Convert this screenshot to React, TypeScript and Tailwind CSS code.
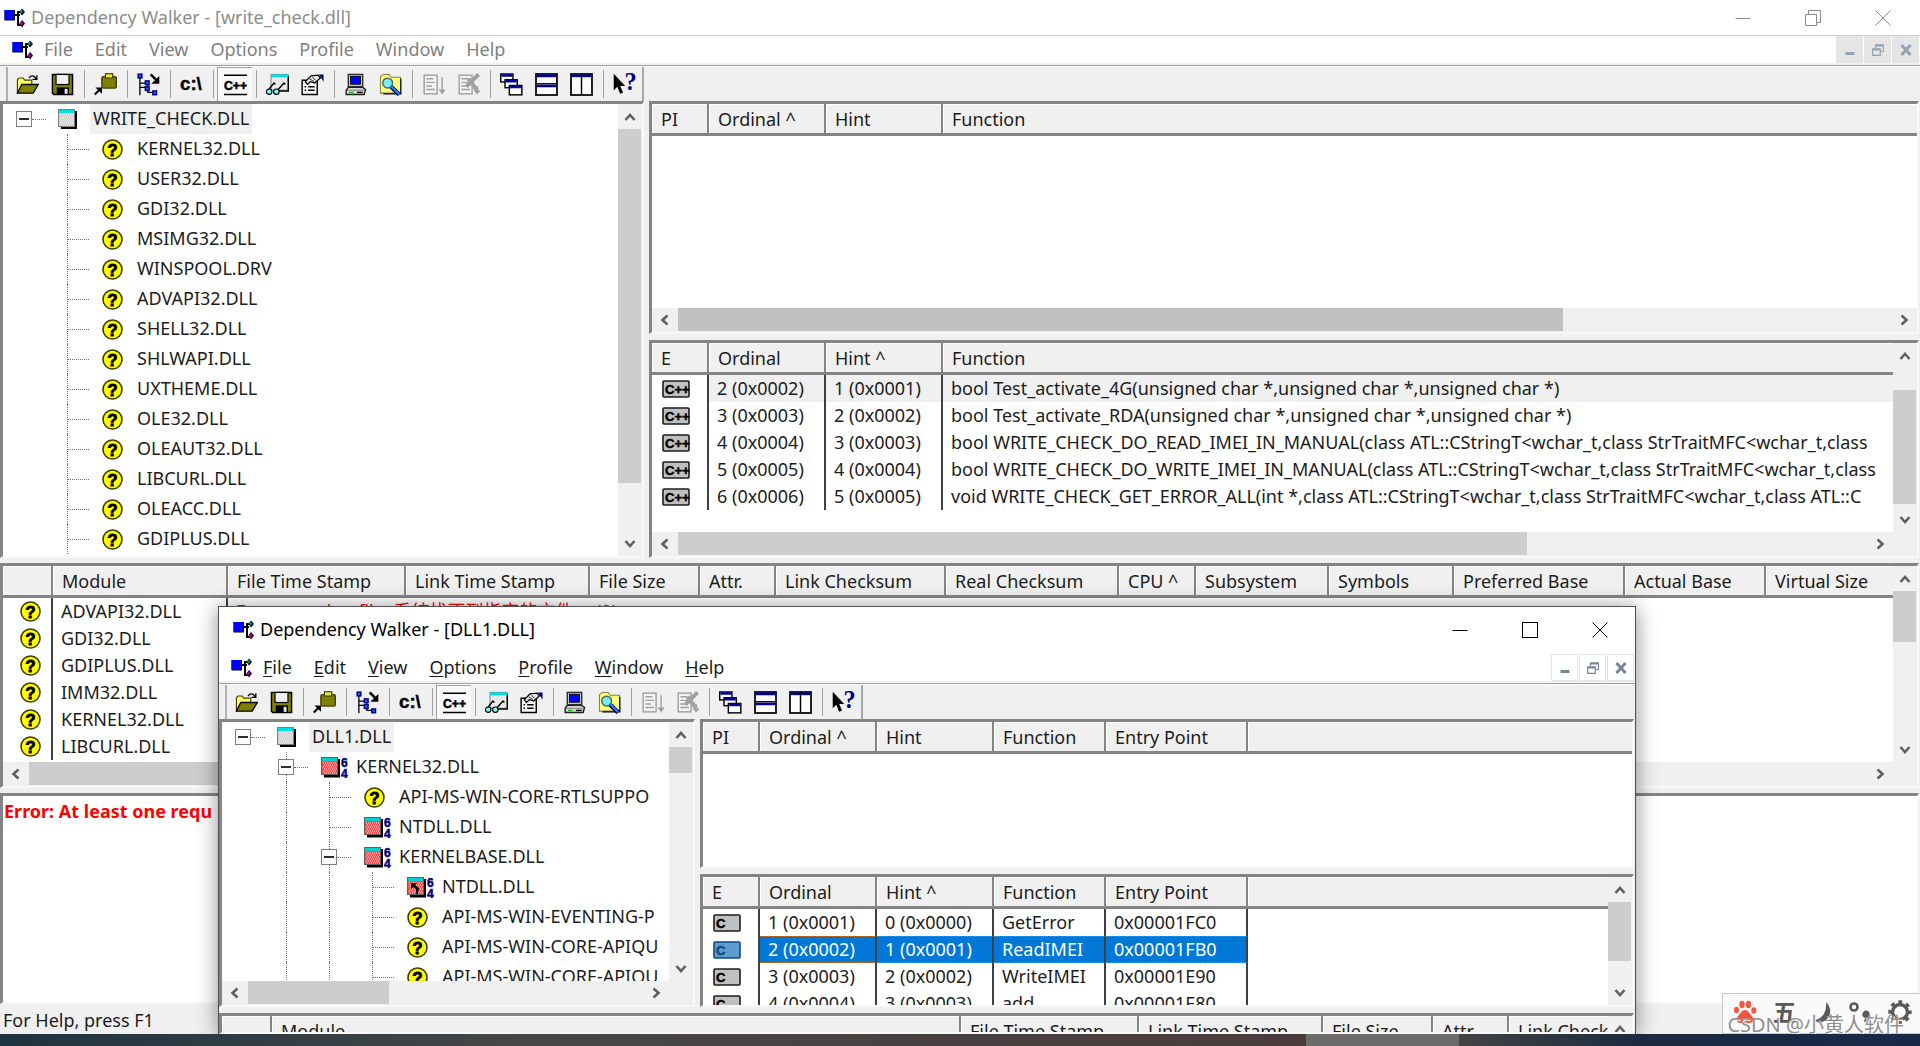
import type { ReactNode } from "react";
import clsx from "clsx";

type TreeNode = {
  name: string;
  level: number;
  icon: "root" | "missing" | "module" | "duplicate";
  expander?: boolean;
};

type Column = {
  label: string;
  width: string;
};

type ExportRow = {
  ordinal: string;
  hint: string;
  name: string;
  entry?: string;
  focused?: boolean;
  selected?: boolean;
};

const mainTree: TreeNode[] = [
  { name: "WRITE_CHECK.DLL", level: 0, icon: "root", expander: true },
  { name: "KERNEL32.DLL", level: 1, icon: "missing" },
  { name: "USER32.DLL", level: 1, icon: "missing" },
  { name: "GDI32.DLL", level: 1, icon: "missing" },
  { name: "MSIMG32.DLL", level: 1, icon: "missing" },
  { name: "WINSPOOL.DRV", level: 1, icon: "missing" },
  { name: "ADVAPI32.DLL", level: 1, icon: "missing" },
  { name: "SHELL32.DLL", level: 1, icon: "missing" },
  { name: "SHLWAPI.DLL", level: 1, icon: "missing" },
  { name: "UXTHEME.DLL", level: 1, icon: "missing" },
  { name: "OLE32.DLL", level: 1, icon: "missing" },
  { name: "OLEAUT32.DLL", level: 1, icon: "missing" },
  { name: "LIBCURL.DLL", level: 1, icon: "missing" },
  { name: "OLEACC.DLL", level: 1, icon: "missing" },
  { name: "GDIPLUS.DLL", level: 1, icon: "missing" },
];

const dllTree: TreeNode[] = [
  { name: "DLL1.DLL", level: 0, icon: "root", expander: true },
  { name: "KERNEL32.DLL", level: 1, icon: "module", expander: true },
  { name: "API-MS-WIN-CORE-RTLSUPPO", level: 2, icon: "missing" },
  { name: "NTDLL.DLL", level: 2, icon: "module" },
  { name: "KERNELBASE.DLL", level: 2, icon: "module", expander: true },
  { name: "NTDLL.DLL", level: 3, icon: "duplicate" },
  { name: "API-MS-WIN-EVENTING-P", level: 3, icon: "missing" },
  { name: "API-MS-WIN-CORE-APIQU", level: 3, icon: "missing" },
  { name: "API-MS-WIN-CORE-APIQU", level: 3, icon: "missing" },
];

const mainExports: ExportRow[] = [
  {
    ordinal: "2 (0x0002)",
    hint: "1 (0x0001)",
    name: "bool Test_activate_4G(unsigned char *,unsigned char *,unsigned char *)",
    focused: true,
  },
  {
    ordinal: "3 (0x0003)",
    hint: "2 (0x0002)",
    name: "bool Test_activate_RDA(unsigned char *,unsigned char *,unsigned char *)",
  },
  {
    ordinal: "4 (0x0004)",
    hint: "3 (0x0003)",
    name: "bool WRITE_CHECK_DO_READ_IMEI_IN_MANUAL(class ATL::CStringT<wchar_t,class StrTraitMFC<wchar_t,class",
  },
  {
    ordinal: "5 (0x0005)",
    hint: "4 (0x0004)",
    name: "bool WRITE_CHECK_DO_WRITE_IMEI_IN_MANUAL(class ATL::CStringT<wchar_t,class StrTraitMFC<wchar_t,class",
  },
  {
    ordinal: "6 (0x0006)",
    hint: "5 (0x0005)",
    name: "void WRITE_CHECK_GET_ERROR_ALL(int *,class ATL::CStringT<wchar_t,class StrTraitMFC<wchar_t,class ATL::C",
  },
];

const dllExports: ExportRow[] = [
  { ordinal: "1 (0x0001)", hint: "0 (0x0000)", name: "GetError", entry: "0x00001FC0" },
  { ordinal: "2 (0x0002)", hint: "1 (0x0001)", name: "ReadIMEI", entry: "0x00001FB0", selected: true },
  { ordinal: "3 (0x0003)", hint: "2 (0x0002)", name: "WriteIMEI", entry: "0x00001E90" },
  { ordinal: "4 (0x0004)", hint: "3 (0x0003)", name: "add", entry: "0x00001E80" },
];

const importColumns: Column[] = [
  { label: "PI", width: "w-[57px]" },
  { label: "Ordinal ^", width: "w-[117px]" },
  { label: "Hint", width: "w-[117px]" },
  { label: "Function", width: "" },
];

const exportColumns: Column[] = [
  { label: "E", width: "w-[57px]" },
  { label: "Ordinal", width: "w-[117px]" },
  { label: "Hint ^", width: "w-[117px]" },
  { label: "Function", width: "" },
];

const dllImportColumns: Column[] = [
  { label: "PI", width: "w-[57px]" },
  { label: "Ordinal ^", width: "w-[117px]" },
  { label: "Hint", width: "w-[117px]" },
  { label: "Function", width: "w-[112px]" },
  { label: "Entry Point", width: "w-[142px]" },
  { label: "", width: "" },
];

const dllExportColumns: Column[] = [
  { label: "E", width: "w-[57px]" },
  { label: "Ordinal", width: "w-[117px]" },
  { label: "Hint ^", width: "w-[117px]" },
  { label: "Function", width: "w-[112px]" },
  { label: "Entry Point", width: "w-[142px]" },
  { label: "", width: "" },
];

const moduleColumns: Column[] = [
  { label: "", width: "w-[50px]" },
  { label: "Module", width: "w-[175px]" },
  { label: "File Time Stamp", width: "w-[178px]" },
  { label: "Link Time Stamp", width: "w-[184px]" },
  { label: "File Size", width: "w-[110px]" },
  { label: "Attr.", width: "w-[76px]" },
  { label: "Link Checksum", width: "w-[170px]" },
  { label: "Real Checksum", width: "w-[173px]" },
  { label: "CPU ^", width: "w-[77px]" },
  { label: "Subsystem", width: "w-[133px]" },
  { label: "Symbols", width: "w-[125px]" },
  { label: "Preferred Base", width: "w-[171px]" },
  { label: "Actual Base", width: "w-[141px]" },
  { label: "Virtual Size", width: "" },
];

const dllModuleColumns: Column[] = [
  { label: "", width: "w-[50px]" },
  { label: "Module", width: "w-[689px]" },
  { label: "File Time Stamp", width: "w-[178px]" },
  { label: "Link Time Stamp", width: "w-[184px]" },
  { label: "File Size", width: "w-[110px]" },
  { label: "Attr.", width: "w-[76px]" },
  { label: "Link Check", width: "" },
];

const modules = ["ADVAPI32.DLL", "GDI32.DLL", "GDIPLUS.DLL", "IMM32.DLL", "KERNEL32.DLL", "LIBCURL.DLL"];

const menus = ["File", "Edit", "View", "Options", "Profile", "Window", "Help"];

/* ---------- icons ---------- */

const AppIcon = () => (
  <svg viewBox="0 0 21 20" className="h-5 w-[21px] shrink-0">
    <path d="M11 7h5M14 3v14h3M14 4h3" stroke="#000" strokeWidth="2" fill="none" />
    <rect x="0.5" y="2" width="10.5" height="10.5" fill="#000" />
    <rect x="0.5" y="2" width="9.5" height="9.5" fill="#0000ff" />
    <path d="M18 0.5l3 3.5-3 3.5-2.500-3.500z" fill="#000" />
    <path d="M17.500 1.500l2 2-2 2-2-2z" fill="#008080" />
    <path d="M18 12l3 3.500-3 4-2.500-4z" fill="#000" />
    <path d="M17.500 13l2 2.500-2 2.500-2-2.500z" fill="#a000a0" />
  </svg>
);

const MissingIcon = () => (
  <svg viewBox="0 0 21 21" className="size-[21px] shrink-0">
    <circle cx="10.5" cy="10.5" r="9.500" fill="#ffff00" stroke="#3c3c00" strokeWidth="1.600" />
    <text x="10.5" y="16.500" textAnchor="middle" fontFamily="Liberation Sans" fontWeight="700" fontSize="17" stroke="#000" strokeWidth="0.8">
      ?
    </text>
  </svg>
);

const RootIcon = () => (
  <svg viewBox="0 0 19 20" className="h-5 w-[19px] shrink-0">
    <path d="M2 2h17v18h-16z" fill="#000" />
    <rect x="0.500" y="0.500" width="16" height="17" fill="#d0d0d0" stroke="#808080" />
    <rect x="1" y="1" width="15" height="3" fill="#00e0e0" />
    <path d="M2 6h13M3 8h13M2 10h13M3 12h13M2 14h13M3 16h13" stroke="#f4f4f4" strokeDasharray="1 1" />
  </svg>
);

const ModuleIcon = ({ duplicate }: { duplicate?: boolean }) => (
  <svg viewBox="0 0 28 21" className="h-[21px] w-7 shrink-0">
    <path d="M2 2h17v18.500h-16z" fill="#000" />
    <rect x="0.500" y="0.500" width="16" height="17" fill="#ff4848" stroke="#606060" />
    <rect x="1" y="1" width="15" height="3" fill="#00d0d0" />
    <path d="M2 6h13M3 8h13M2 10h13M3 12h13M2 14h13M3 16h13" stroke="#ffe0e0" strokeDasharray="1 1" />
    {duplicate && <path d="M4 6h6l-2 2 4 3-1 6h-2l0-5-3-2-2 2z" fill="#000" />}
    <text x="20" y="9.500" fontFamily="Liberation Sans" fontWeight="700" fontSize="12" fill="#000080" stroke="#000080" strokeWidth="0.500">
      6
    </text>
    <text x="20" y="20.500" fontFamily="Liberation Sans" fontWeight="700" fontSize="12" fill="#000080" stroke="#000080" strokeWidth="0.500">
      4
    </text>
  </svg>
);

const ExportIcon = ({ label, selected }: { label: string; selected?: boolean }) => (
  <svg viewBox="0 0 28 18" className="h-[18px] w-7 shrink-0">
    <rect
      x="1"
      y="1"
      width="26"
      height="16"
      rx="1"
      fill={selected ? "#5f9bcd" : "#c0c0c0"}
      stroke={selected ? "#0a4a86" : "#1c1c1c"}
      strokeWidth="1.600"
    />
    <text
      x="3"
      y="13.500"
      fontFamily="Liberation Sans"
      fontWeight="700"
      fontSize="13"
      fill={selected ? "#0a4a86" : "#000"}
      stroke={selected ? "#0a4a86" : "#000"}
      strokeWidth="0.500"
    >
      {label}
    </text>
  </svg>
);

const Chevron = ({ dir }: { dir: "up" | "down" | "left" | "right" }) => {
  const paths = {
    up: "M1.500 9l4.500-5 4.500 5",
    down: "M1.500 3l4.500 5 4.500-5",
    left: "M8.500 1.500l-5 4.500 5 4.500",
    right: "M3.500 1.500l5 4.500-5 4.500",
  };
  return (
    <svg viewBox="0 0 12 12" className="size-3">
      <path d={paths[dir]} fill="none" stroke="#606060" strokeWidth="2.600" />
    </svg>
  );
};

const ToolSvg = ({ children }: { children: ReactNode }) => (
  <svg viewBox="0 0 16 16" className="size-[23px]">
    {children}
  </svg>
);

const page = (
  <>
    <rect x="1.500" y="1.500" width="9" height="13" fill="#f4f4f4" stroke="#a0a0a0" />
    <path d="M3 4h5M3 6.500h6M3 9h4M3 11.500h6" stroke="#a0a0a0" />
  </>
);

type Tool = { name: string; pressed?: boolean; icon: ReactNode };

const toolGroups: Tool[][] = [
  [
    {
      name: "Open",
      icon: (
        <ToolSvg>
          <path d="M1 14V4.500l1-1h3l1 1.500h5v3" fill="#ffff60" stroke="#404000" strokeWidth="0.800" />
          <path d="M1 14l3-6h11.500l-3.500 6z" fill="#808000" stroke="#000" strokeWidth="0.900" />
          <path d="M9 3.500c1.500-2 3.500-2 5 0.500M14.500 1.500v3h-3" fill="none" stroke="#000" strokeWidth="0.900" />
        </ToolSvg>
      ),
    },
    {
      name: "Save",
      icon: (
        <ToolSvg>
          <path d="M1 1h14v14H2l-1-1z" fill="#808000" stroke="#000" />
          <rect x="3.500" y="1" width="9" height="7" fill="#f0f0f0" stroke="#000" strokeWidth="0.800" />
          <rect x="4" y="10" width="8.500" height="5" fill="#000" />
          <rect x="9.500" y="11" width="2" height="3.500" fill="#f0f0f0" />
        </ToolSvg>
      ),
    },
  ],
  [
    {
      name: "Configure Module Search Order",
      icon: (
        <ToolSvg>
          <rect x="5.500" y="2.500" width="10" height="8" rx="1" fill="#808000" stroke="#404000" />
          <rect x="8" y="0.500" width="5" height="3" fill="#e8e840" stroke="#404000" strokeWidth="0.800" />
          <path d="M0.500 15l3.500-3.500" stroke="#000" strokeWidth="1.500" />
          <path d="M1 10h4.500v4.500z" fill="#000" />
        </ToolSvg>
      ),
    },
  ],
  [
    {
      name: "Auto Expand",
      icon: (
        <ToolSvg>
          <path d="M2 3v12.500M2 7h5M7.500 8v5.500h4" fill="none" stroke="#000" strokeWidth="0.900" />
          <path d="M2 10h4" stroke="#000" strokeWidth="0.900" />
          <rect x="0.800" y="0.800" width="2.600" height="2.600" fill="#2060ff" stroke="#000080" />
          <rect x="5.800" y="5.500" width="2.600" height="2.600" fill="#2060ff" stroke="#000080" />
          <rect x="5.800" y="9.500" width="2.600" height="2.600" fill="#2060ff" stroke="#000080" />
          <rect x="11" y="12.500" width="2.600" height="2.600" fill="#2060ff" stroke="#000080" />
          <path d="M9.500 1l4 4" stroke="#000" strokeWidth="1.800" />
          <path d="M15.500 2v5.500h-5.500z" fill="#000" />
        </ToolSvg>
      ),
    },
  ],
  [
    {
      name: "View Full Paths",
      icon: (
        <ToolSvg>
          <text x="0" y="11.500" fontFamily="Liberation Sans" fontWeight="700" fontSize="13" stroke="#000" strokeWidth="0.300">
            c:\
          </text>
        </ToolSvg>
      ),
    },
  ],
  [
    {
      name: "Undecorate C++ Functions",
      pressed: true,
      icon: (
        <ToolSvg>
          <path d="M0 1.500h16M0 15h16" stroke="#000" />
          <text x="0" y="11.500" fontFamily="Liberation Sans" fontWeight="700" fontSize="8.500" stroke="#000" strokeWidth="0.400">
            C++
          </text>
        </ToolSvg>
      ),
    },
  ],
  [
    {
      name: "View Module in External Viewer",
      icon: (
        <ToolSvg>
          <rect x="3.500" y="1" width="12" height="11" fill="#e8e8e8" stroke="#909090" strokeWidth="0.800" />
          <path d="M15.500 2v10.500h-7" fill="none" stroke="#000" />
          <rect x="3.500" y="1" width="12" height="2" fill="#00e0e0" />
          <path d="M1.500 12l4-5 1 1M8 12l4.500-5 1 1" fill="none" stroke="#000" />
          <circle cx="2.200" cy="13" r="1.900" fill="#80ffff" stroke="#000" strokeWidth="0.800" />
          <circle cx="7.200" cy="13" r="1.900" fill="#80ffff" stroke="#000" strokeWidth="0.800" />
        </ToolSvg>
      ),
    },
    {
      name: "Properties",
      icon: (
        <ToolSvg>
          <path d="M0.800 5h10.500v10H0.800z" fill="#f8f8f8" stroke="#000" />
          <path d="M2.500 9.500h1M5 9.500h4.500M2.500 12h1M5 12h4.500" stroke="#000" />
          <path d="M3 6l4-4 5-0.500 1.500 2-4 3.500-3-1-2 2z" fill="#e8e8e8" stroke="#000" strokeWidth="0.900" />
          <path d="M6 4l3 2M8 3l2 2" stroke="#000" strokeWidth="0.600" />
          <path d="M12.500 1h3.200v5z" fill="#000080" />
        </ToolSvg>
      ),
    },
  ],
  [
    {
      name: "System Information",
      icon: (
        <ToolSvg>
          <rect x="3" y="1" width="10" height="8.500" fill="#d0d0d0" stroke="#303030" />
          <rect x="4.500" y="2.300" width="7" height="5.500" fill="#0000ff" stroke="#000" strokeWidth="0.600" />
          <path d="M3 15h11l1-3.500-2-1.500H3l-1.500 2v3z" fill="#d8d8d8" stroke="#202020" />
          <path d="M2 12h12" stroke="#808080" strokeWidth="0.700" />
          <path d="M3.500 13.500h3" stroke="#00c000" />
          <path d="M9 13.500h4" stroke="#000" />
        </ToolSvg>
      ),
    },
    {
      name: "Search",
      icon: (
        <ToolSvg>
          <path d="M1 14V2.500l2-1.500h4l1.500 2H15v11z" fill="#ffff70" stroke="#808040" strokeWidth="0.700" />
          <path d="M15.200 4v10.500H3" fill="none" stroke="#000" strokeWidth="0.800" />
          <circle cx="6" cy="7" r="3.400" fill="#70f0ff" stroke="#506070" />
          <path d="M8.500 9.500l5.500 5.500" stroke="#000060" strokeWidth="3" />
          <path d="M8.500 9.200l5.500 5.500" stroke="#2080ff" strokeWidth="1.500" />
        </ToolSvg>
      ),
    },
  ],
  [
    {
      name: "Start Profiling",
      icon: (
        <ToolSvg>
          {page}
          <path d="M14 3v10" stroke="#a0a0a0" />
          <path d="M11.500 11.500h5L14 15z" fill="#a0a0a0" />
        </ToolSvg>
      ),
    },
    {
      name: "Stop Profiling",
      icon: (
        <ToolSvg>
          {page}
          <path d="M6.500 9.500L15 1M8 4l6 8" stroke="#a0a0a0" strokeWidth="2.800" />
          <path d="M14 9v4" stroke="#a0a0a0" />
          <path d="M11.500 12h5L14 15z" fill="#a0a0a0" />
        </ToolSvg>
      ),
    },
  ],
  [
    {
      name: "Cascade",
      icon: (
        <ToolSvg>
          <g fill="#fff" stroke="#000">
            <rect x="0.500" y="0.700" width="8.500" height="5.500" />
            <rect x="3.500" y="4.700" width="8.500" height="5.500" />
            <rect x="6.500" y="8.700" width="8.700" height="6.500" />
          </g>
          <path d="M1 1.700h7.500M4 5.700h7.500M7 9.700h7.800" stroke="#0000a0" strokeWidth="1.800" />
        </ToolSvg>
      ),
    },
    {
      name: "Tile Horizontally",
      icon: (
        <ToolSvg>
          <rect x="0.700" y="0.700" width="14.600" height="14.600" fill="#fff" stroke="#000" strokeWidth="1.200" />
          <path d="M1 7.500h14" stroke="#000" />
          <path d="M1.300 2h13.400M1.300 9h13.400" stroke="#0000a0" strokeWidth="1.800" />
        </ToolSvg>
      ),
    },
    {
      name: "Tile Vertically",
      icon: (
        <ToolSvg>
          <rect x="0.700" y="0.700" width="14.600" height="14.600" fill="#fff" stroke="#000" strokeWidth="1.200" />
          <path d="M1.300 2h13.400" stroke="#0000a0" strokeWidth="1.800" />
          <path d="M8 1v14" stroke="#000" />
        </ToolSvg>
      ),
    },
  ],
  [
    {
      name: "Context Help",
      icon: (
        <ToolSvg>
          <path d="M0.500 0.500v11.500l2.500-2.500 2 5 2-1-2-4.500h3.500z" fill="#000" />
          <text x="8" y="12" fontFamily="Liberation Serif" fontWeight="700" fontSize="17" fill="#000080">
            ?
          </text>
        </ToolSvg>
      ),
    },
  ],
];

/* ---------- window chrome ---------- */

const CaptionButtons = ({ maximized }: { maximized?: boolean }) => (
  <div className={clsx("flex", maximized ? "pr-0.5 text-[#8c8c8c]" : "text-black")}>
    <button aria-label="Minimize" className="flex w-[70px] items-center justify-center">
      <svg viewBox="0 0 16 16" className="size-4">
        <path d="M0.500 8.500h15" stroke="currentColor" />
      </svg>
    </button>
    <button aria-label="Maximize" className="flex w-[70px] items-center justify-center">
      <svg viewBox="0 0 16 16" className="size-4" fill="none" stroke="currentColor">
        {maximized ? (
          <path d="M0.500 4.500h11v11h-11zM3.500 4V0.500h12v12H12" />
        ) : (
          <rect x="0.500" y="0.500" width="15" height="15" />
        )}
      </svg>
    </button>
    <button aria-label="Close" className="flex w-[70px] items-center justify-center">
      <svg viewBox="0 0 16 16" className="size-4">
        <path d="M0.500 0.500l15 15M15.500 0.500l-15 15" stroke="currentColor" />
      </svg>
    </button>
  </div>
);

const MdiButtons = ({ inactive }: { inactive?: boolean }) => {
  const button = clsx(
    "flex h-[27px] w-[27px] items-center justify-center border border-[#e5e5e5]",
    inactive ? "bg-[#e5e5e5] text-[#93a3b5]" : "bg-white text-[#76879b]",
  );
  return (
    <div className="flex gap-px pr-px">
      <button aria-label="Minimize document" className={button}>
        <svg viewBox="0 0 12 12" className="size-3">
          <path d="M1.500 9.500h9" stroke="currentColor" strokeWidth="3" />
        </svg>
      </button>
      <button aria-label="Restore document" className={button}>
        <svg viewBox="0 0 12 12" className="size-3" fill="none" stroke="currentColor">
          <path d="M0.700 5h7.600v6.300H0.700zM3.500 4V1h8v6.500H9" strokeWidth="1.200" />
          <path d="M0.500 5.500h8M3.500 1.500h8" strokeWidth="2" />
        </svg>
      </button>
      <button aria-label="Close document" className={button}>
        <svg viewBox="0 0 12 12" className="size-3">
          <path d="M1.500 1l9 10M10.500 1l-9 10" stroke="currentColor" strokeWidth="3" />
        </svg>
      </button>
    </div>
  );
};

const MenuBar = ({ inactive }: { inactive?: boolean }) => (
  <nav className="flex h-[29px] shrink-0 justify-between border-b-2 border-[#f0f0f0] bg-white pl-3">
    <div className="flex items-center">
      <AppIcon />
      {menus.map((menu) => (
        <button key={menu} className={clsx("px-[11px] pb-[2px] leading-6", inactive && "text-[#808080]")}>
          <span className={clsx(!inactive && "underline underline-offset-2")}>{menu[0]}</span>
          {menu.slice(1)}
        </button>
      ))}
    </div>
    <MdiButtons inactive={inactive} />
  </nav>
);

const Toolbar = () => (
  <div className="flex h-9 shrink-0 border-t border-[#a0a0a0] bg-[#f0f0f0]">
    <div className="flex grow border-t border-white">
      <div className="flex border-r-2 border-[#a8a8a8]">
        <div className="mr-[2px] w-2 border-r-2 border-[#b0b0b0]" />
        {toolGroups.map((group, index) => (
          <div key={index} className="flex">
            {index > 0 && (
              <div className="flex w-2 justify-center py-[3px]">
                <div className="w-px bg-[#a0a0a0]" />
              </div>
            )}
            {group.map((tool) => (
              <button
                key={tool.name}
                aria-label={tool.name}
                className={clsx(
                  "flex w-[35px] items-center justify-center",
                  tool.pressed && "border-t border-l border-[#a0a0a0] bg-[#f8f8f8]",
                )}
              >
                {tool.icon}
              </button>
            ))}
          </div>
        ))}
      </div>
    </div>
  </div>
);

/* ---------- panes ---------- */

const Pane = ({ className, children }: { className?: string; children?: ReactNode }) => (
  <section
    className={clsx(
      "flex flex-col overflow-hidden border-t-[3px] border-r-2 border-b-2 border-l-[3px] border-t-[#848484] border-r-[#f8f8f8] border-b-[#f8f8f8] border-l-[#848484] bg-white",
      className,
    )}
  >
    {children}
  </section>
);

const VScroll = ({ thumb }: { thumb: string }) => (
  <div className="flex w-6 shrink-0 flex-col bg-[#f0f0f0] pr-px">
    <button aria-label="Scroll up" className="flex h-[25px] shrink-0 items-center justify-center">
      <Chevron dir="up" />
    </button>
    <div className="min-h-0 grow">
      <div className={clsx("bg-[#cdcdcd]", thumb)} />
    </div>
    <button aria-label="Scroll down" className="flex h-[25px] shrink-0 items-center justify-center">
      <Chevron dir="down" />
    </button>
  </div>
);

const HScroll = ({ thumb, corner }: { thumb: string; corner?: boolean }) => (
  <div className={clsx("flex h-6 shrink-0 bg-[#f0f0f0]", corner && "pr-6")}>
    <button aria-label="Scroll left" className="flex w-[26px] shrink-0 items-center justify-center">
      <Chevron dir="left" />
    </button>
    <div className="flex grow pb-px">
      <div className={thumb} />
    </div>
    <button aria-label="Scroll right" className="flex w-[26px] shrink-0 items-center justify-center">
      <Chevron dir="right" />
    </button>
  </div>
);

const GridTable = ({ columns, children }: { columns: Column[]; children?: ReactNode }) => (
  <div className="min-w-0 grow overflow-hidden">
    <table className="w-full table-fixed border-separate border-spacing-0">
      <thead>
        <tr>
          {columns.map((column, index) => (
            <th
              key={index}
              className={clsx(
                "h-8 overflow-hidden border-b-[3px] border-[#848484] bg-[#f0f0f0] p-0 text-left leading-7 font-normal whitespace-nowrap",
                index < columns.length - 1 && "border-r-2",
                column.width,
              )}
            >
              <div className="h-[29px] border-t border-l border-white pl-2">{column.label}</div>
            </th>
          ))}
        </tr>
      </thead>
      <tbody>{children}</tbody>
    </table>
  </div>
);

const Tree = ({ nodes }: { nodes: TreeNode[] }) => (
  <ul className="min-h-0 min-w-0 grow overflow-hidden">
    {nodes.map((node, index) => (
      <li key={index} className="flex h-[30px] items-center whitespace-nowrap">
        {Array.from({ length: node.level + 1 }, (_, level) => {
          const own = level === node.level;
          return (
            <span key={level} className="flex h-full w-[43px] shrink-0 items-center">
              {own && node.expander ? (
                <>
                  <span className="flex h-full w-[29px] flex-col items-end">
                    <span className={clsx("mr-[7px] grow border-l border-dotted", level > 0 ? "border-[#707070]" : "border-transparent")} />
                    <span className="flex size-4 shrink-0 items-center justify-center border border-[#808080] bg-white">
                      <span className="h-[2px] w-[10px] bg-[#303030]" />
                    </span>
                    <span className={clsx("mr-[7px] grow border-l border-dotted", level > 0 ? "border-[#707070]" : "border-transparent")} />
                  </span>
                  <span className="grow border-t border-dotted border-[#707070]" />
                </>
              ) : (
                level > 0 && (
                  <>
                    <span className="ml-[21px] h-full border-l border-dotted border-[#707070]" />
                    {own && <span className="grow border-t border-dotted border-[#707070]" />}
                  </>
                )
              )}
            </span>
          );
        })}
        <span className={clsx("flex shrink-0", index === 0 ? "w-11 pl-3" : "w-[45px] pl-[13px]")}>
          {node.icon === "root" && <RootIcon />}
          {node.icon === "missing" && <MissingIcon />}
          {node.icon === "module" && <ModuleIcon />}
          {node.icon === "duplicate" && <ModuleIcon duplicate />}
        </span>
        <span className={clsx("px-[3px] pb-[2px] leading-7", index === 0 && "bg-[#f0f0f0]")}>{node.name}</span>
      </li>
    ))}
  </ul>
);

const ExportRows = ({ rows, icon }: { rows: ExportRow[]; icon: string }) => (
  <>
    {rows.map((row) => {
      const cell = clsx(
        "overflow-hidden py-0 pr-0 pl-2 whitespace-nowrap",
        row.focused && "bg-[#f0f0f0]",
        row.selected && "border-y border-dotted border-y-[#c07830] bg-[#0078d7] text-white",
      );
      const line = "border-r-2 border-r-[#404040] [border-right-style:solid]";
      return (
        <tr key={row.ordinal} className="h-[27px] leading-[25px]">
          <td className={clsx("p-0 pl-[10px]", line)}>
            <ExportIcon label={icon} selected={row.selected} />
          </td>
          <td className={clsx(cell, line)}>{row.ordinal}</td>
          <td className={clsx(cell, line)}>{row.hint}</td>
          <td className={clsx(cell, row.entry && line)}>{row.name}</td>
          {row.entry && <td className={clsx(cell, line)}>{row.entry}</td>}
        </tr>
      );
    })}
  </>
);

/* ---------- windows ---------- */

const MainWindow = () => (
  <main className="flex h-full flex-col bg-[#f0f0f0]">
    <header className="flex h-9 shrink-0 justify-between border-b border-[#cccccc] bg-white pl-1">
      <div className="flex items-center gap-[6px] text-[#8c8c8c]">
        <AppIcon />
        <h1 className="pb-px">Dependency Walker - [write_check.dll]</h1>
      </div>
      <CaptionButtons maximized />
    </header>
    <MenuBar inactive />
    <Toolbar />

    <div className="flex h-[457px] shrink-0 gap-[5px] pr-px">
      <Pane className="w-[644px] shrink-0">
        <div className="flex min-h-0 grow">
          <Tree nodes={mainTree} />
          <VScroll thumb="h-[88%]" />
        </div>
      </Pane>
      <div className="flex min-w-0 grow flex-col gap-[6px]">
        <Pane className="h-[233px]">
          <div className="flex min-h-0 grow">
            <GridTable columns={importColumns} />
          </div>
          <HScroll thumb="w-[73%] bg-[#c1c1c1]" />
        </Pane>
        <Pane className="min-h-0 grow">
          <div className="flex min-h-0 grow">
            <GridTable columns={exportColumns}>
              <ExportRows rows={mainExports} icon="C++" />
            </GridTable>
            <VScroll thumb="mt-[22px] h-[114px]" />
          </div>
          <HScroll thumb="w-[849px] bg-[#cdcdcd]" corner />
        </Pane>
      </div>
    </div>

    <Pane className="mt-[5px] mr-px h-[225px] shrink-0">
      <div className="flex min-h-0 grow">
        <GridTable columns={moduleColumns}>
          {modules.map((name, index) => (
            <tr key={name} className="h-[27px] leading-[25px]">
              <td className="border-r-2 border-[#404040] p-0 pl-[17px]">
                <MissingIcon />
              </td>
              <td className={clsx("p-0 pl-2", index === 0 && "border-r-2 border-[#404040]")}>{name}</td>
              {index === 0 && (
                <td colSpan={12} className="p-0 pl-2 text-[#ff0000]">
                  Error opening file. 系统找不到指定的文件。 (2).
                </td>
              )}
            </tr>
          ))}
        </GridTable>
        <VScroll thumb="h-[51px]" />
      </div>
      <HScroll thumb="w-[60%] bg-[#cdcdcd]" corner />
    </Pane>

    <Pane className="mt-[5px] mr-px min-h-0 grow">
      <p className="pt-px pl-px leading-7 font-bold text-[#ff0000]">Error: At least one requ</p>
    </Pane>
    <footer className="flex h-[30px] shrink-0 items-center pt-[2px] pl-[3px]">For Help, press F1</footer>
  </main>
);

const DllWindow = () => (
  <section className="absolute top-[606px] right-[284px] bottom-0 left-[218px] flex flex-col overflow-hidden border border-b-0 border-[#505050] bg-[#f0f0f0] shadow-[0_2px_20px_rgba(0,0,0,0.45)]">
    <header className="flex h-[47px] shrink-0 justify-between bg-white pb-[2px] pl-[14px]">
      <div className="flex items-center gap-[6px] text-black">
        <AppIcon />
        <h2 className="pb-px">Dependency Walker - [DLL1.DLL]</h2>
      </div>
      <CaptionButtons />
    </header>
    <MenuBar />
    <Toolbar />

    <div className="flex h-[288px] shrink-0 gap-[5px] pr-px">
      <Pane className="w-[476px] shrink-0">
        <div className="flex min-h-0 grow">
          <Tree nodes={dllTree} />
          <VScroll thumb="h-[26px]" />
        </div>
        <HScroll thumb="w-[141px] bg-[#cdcdcd]" corner />
      </Pane>
      <div className="flex min-w-0 grow flex-col gap-[6px]">
        <Pane className="h-[149px] shrink-0">
          <GridTable columns={dllImportColumns} />
        </Pane>
        <Pane className="min-h-0 grow">
          <div className="flex min-h-0 grow">
            <GridTable columns={dllExportColumns}>
              <ExportRows rows={dllExports} icon="C" />
            </GridTable>
            <VScroll thumb="h-[59px]" />
          </div>
        </Pane>
      </div>
    </div>

    <Pane className="mt-[6px] mr-px min-h-0 grow border-b-0">
      <div className="flex min-h-0 grow">
        <GridTable columns={dllModuleColumns} />
        <VScroll thumb="h-0" />
      </div>
    </Pane>
  </section>
);

const ImeBar = () => (
  <aside className="absolute right-0 bottom-0 flex h-[41px] w-[198px] items-center justify-between border border-r-0 border-[#c8c8c8] bg-[#fafafa] pr-2 pb-1 pl-[10px] text-[#5a5a5a]">
    <svg viewBox="0 0 24 24" className="size-6" fill="#f0593c">
      <ellipse cx="3.500" cy="10" rx="2.500" ry="3.200" />
      <ellipse cx="9" cy="4.500" rx="2.700" ry="3.800" />
      <ellipse cx="15.500" cy="4.500" rx="2.700" ry="3.800" />
      <ellipse cx="20.800" cy="10.500" rx="2.500" ry="3.200" />
      <path d="M12 10c3 0 4 3 6.500 5.500 3 3 2 7.500-2 7.500-2 0-3-0.500-4.500-0.500S9.500 23 7.500 23c-4 0-5-4.500-2-7.500C8 13 9 10 12 10z" />
    </svg>
    <span className="text-2xl leading-6 font-bold">五</span>
    <svg viewBox="0 0 20 24" className="h-6 w-5" fill="currentColor">
      <path d="M13 2c7 7 5 17-4 20-3 1-6 0-8-2 9-1 13-9 12-18z" />
    </svg>
    <svg viewBox="0 0 24 24" className="size-6" fill="currentColor">
      <circle cx="6" cy="7" r="3.500" fill="none" stroke="currentColor" strokeWidth="2.600" />
      <path d="M15 12.500a3.500 3.500 0 1 1 5 4.500c-1 3-2 4.500-4 5.500l1-4.500a3.500 3.500 0 0 1-2-5.500z" />
    </svg>
    <svg viewBox="0 0 24 24" className="size-6" fill="none" stroke="currentColor">
      <circle cx="12" cy="12" r="7.500" strokeWidth="3.500" />
      <circle cx="12" cy="12" r="10.200" strokeWidth="3" strokeDasharray="4 4.010" strokeDashoffset="2" />
    </svg>
    <span className="absolute right-4 bottom-[-6px] text-[20px] leading-7 whitespace-nowrap text-[#8f8f8f] [text-shadow:1px_1px_0_#fff]">
      CSDN @小黄人软件
    </span>
  </aside>
);

const App = () => {
  return (
    <div className="flex h-screen flex-col overflow-hidden font-['Noto_Sans','Noto_Sans_CJK_SC',sans-serif] text-[18px] text-[#1c1c1c]">
      <div className="relative min-h-0 grow overflow-hidden">
        <MainWindow />
        <DllWindow />
        <ImeBar />
      </div>
      <div className="flex h-3 shrink-0">
        <div className="w-[68%] bg-linear-to-r from-[#1e3440] via-[#464646] via-40% to-[#4a3c3c]" />
        <div className="w-[8%] bg-[#6c6a6a]" />
        <div className="grow bg-linear-to-r from-[#434343] via-[#1b2a40] via-40% to-[#182848]" />
      </div>
    </div>
  );
};

export default App;
